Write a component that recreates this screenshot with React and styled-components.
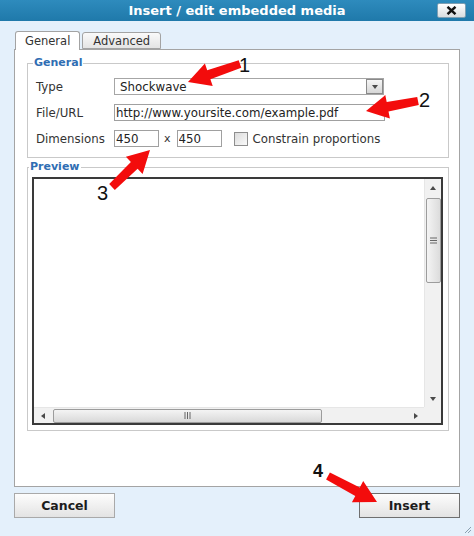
import React from "react";
import styled, { createGlobalStyle } from "styled-components";

const GlobalStyle = createGlobalStyle`
  html, body {
    margin: 0;
    padding: 0;
    background: #e4f0fb;
  }
  body {
    font-family: "DejaVu Sans", Verdana, sans-serif;
    color: #333;
  }
`;

const Window = styled.div`
  position: relative;
  width: 474px;
  height: 536px;
  background: #e4f0fb;
  overflow: hidden;
`;

const TitleBar = styled.div`
  height: 21px;
  display: grid;
  grid-template-columns: 1fr auto 1fr;
  align-items: center;
  background: linear-gradient(#2e8bbd, #1f79aa);
`;

const Title = styled.div`
  grid-column: 2;
  color: #fff;
  font-weight: bold;
  font-size: 13px;
  white-space: nowrap;
`;

const CloseButton = styled.div`
  grid-column: 3;
  justify-self: end;
  margin-right: 8px;
  width: 29px;
  height: 15px;
  box-sizing: border-box;
  display: flex;
  align-items: center;
  justify-content: center;
  background: linear-gradient(#ffffff, #d9dde0);
  border: 1px solid #7e9fb3;
  border-radius: 2px;
`;

const Body = styled.div`
  padding: 10px 14px 0 14px;
`;

const Tabs = styled.div`
  display: flex;
  align-items: flex-end;
  gap: 2px;
  padding-left: 1px;
  height: 18px;
  position: relative;
  z-index: 1;
`;

const Tab = styled.div`
  box-sizing: border-box;
  height: ${(p) => (p.active ? "19px" : "17px")};
  margin-bottom: ${(p) => (p.active ? "-1px" : "0")};
  padding: 0 ${(p) => (p.active ? "9px" : "10px")};
  display: flex;
  align-items: center;
  font-size: 11.5px;
  color: #333;
  border: 1px solid #a3a3a3;
  border-bottom: ${(p) => (p.active ? "none" : "1px solid #a3a3a3")};
  border-radius: 3px 3px 0 0;
  background: ${(p) => (p.active ? "#fff" : "linear-gradient(#fafafa, #e4e4e4)")};
`;

const Panel = styled.div`
  box-sizing: border-box;
  width: 446px;
  height: 438px;
  padding: 6px 10px 0 12px;
  background: #fff;
  border: 1px solid #a4a4a4;
`;

const Fieldset = styled.fieldset`
  margin: ${(p) => p.$top || 0} 0 0 0;
  padding: ${(p) => p.$pad};
  border: 1px solid #c9c9c9;
  min-width: 0;
`;

const Legend = styled.legend`
  padding: 0 1px;
  margin-left: -3px;
  font-size: 11px;
  line-height: 14px;
  font-weight: bold;
  color: #2f6eb3;
`;

const FormGrid = styled.div`
  display: grid;
  grid-template-columns: 78px 1fr;
  row-gap: 9px;
  align-items: center;
`;

const Label = styled.div`
  font-size: 11.8px;
  color: #333;
`;

const Select = styled.div`
  box-sizing: border-box;
  width: 270px;
  height: 17px;
  display: flex;
  align-items: center;
  justify-content: space-between;
  padding-left: 5px;
  border: 1px solid #a6a6a6;
  font-size: 11.8px;
  color: #222;
`;

const DropButton = styled.div`
  box-sizing: border-box;
  width: 17px;
  height: 15px;
  display: flex;
  align-items: center;
  justify-content: center;
  background: linear-gradient(#f6f6f6, #d6d6d6);
  border: 1px solid #8a8a8a;
`;

const TextInput = styled.input`
  box-sizing: border-box;
  width: ${(p) => p.$w}px;
  height: 17px;
  margin: 0;
  padding: 0 1px;
  border: 1px solid #a0a0a0;
  font-family: "DejaVu Sans", Verdana, sans-serif;
  font-size: 11.8px;
  color: #222;
  outline: none;
`;

const DimRow = styled.div`
  display: flex;
  align-items: center;
`;

const Times = styled.span`
  font-size: 11px;
  margin: 0 6px 0 5px;
  color: #333;
`;

const CheckBox = styled.span`
  box-sizing: border-box;
  width: 14px;
  height: 14px;
  margin-left: 12px;
  margin-right: 5px;
  border: 1px solid #8e8e8e;
  background: linear-gradient(135deg, #dcdcdc, #fafafa);
`;

const PreviewBox = styled.div`
  box-sizing: border-box;
  height: 248px;
  border: 2px solid #3a3a3a;
  display: grid;
  grid-template-columns: 1fr 17px;
  grid-template-rows: 1fr 16px;
  background: #fff;
`;

const VScroll = styled.div`
  display: flex;
  flex-direction: column;
  align-items: center;
  background: #f1f1f1;
  border-left: 1px solid #e6e6e6;
`;

const HScroll = styled.div`
  display: flex;
  align-items: center;
  background: #f1f1f1;
  border-top: 1px solid #e6e6e6;
`;

const Corner = styled.div`
  background: #f1f1f1;
`;

const ArrowCell = styled.div`
  flex: 0 0 ${(p) => p.$size}px;
  width: ${(p) => (p.$vertical ? "100%" : `${p.$size}px`)};
  height: ${(p) => (p.$vertical ? `${p.$size}px` : "100%")};
  display: flex;
  align-items: center;
  justify-content: center;
`;

const Thumb = styled.div`
  box-sizing: border-box;
  display: flex;
  align-items: center;
  justify-content: center;
  border: 1px solid #9c9c9c;
  border-radius: 2px;
  background: ${(p) =>
    p.$vertical
      ? "linear-gradient(to right, #f4f4f4, #dcdcdc)"
      : "linear-gradient(#f4f4f4, #d9d9d9)"};
`;

const Spacer = styled.div`
  flex: 1;
`;

const ButtonRow = styled.div`
  display: flex;
  justify-content: space-between;
  margin-top: 6px;
  width: 446px;
`;

const Button = styled.div`
  box-sizing: border-box;
  width: 101px;
  height: 25px;
  display: flex;
  align-items: center;
  justify-content: center;
  font-size: 12.5px;
  font-weight: bold;
  color: #1c1c1c;
  background: linear-gradient(#fdfdfd, #e3e3e3);
  border: 1px solid ${(p) => (p.$dark ? "#6f6f6f" : "#a9a9a9")};
`;

const Overlay = styled.svg`
  position: absolute;
  left: 0;
  top: 0;
  pointer-events: none;
`;

const Grip = styled.svg`
  position: absolute;
  right: 2px;
  bottom: 2px;
`;

const Tri = ({ dir }) => {
  const d = {
    up: "M0,4 L3,0 L6,4 Z",
    down: "M0,0 L6,0 L3,4 Z",
    left: "M4,0 L4,6 L0,3 Z",
    right: "M0,0 L0,6 L4,3 Z",
  }[dir];
  const w = dir === "up" || dir === "down" ? 6 : 4;
  const h = dir === "up" || dir === "down" ? 4 : 6;
  return (
    <svg width={w} height={h} viewBox={`0 0 ${w} ${h}`}>
      <path d={d} fill="#4a4a4a" />
    </svg>
  );
};

const arrowPoints = (x1, y1, x2, y2, shaft, headLen, headW) => {
  const dx = x2 - x1;
  const dy = y2 - y1;
  const len = Math.hypot(dx, dy);
  const ux = dx / len;
  const uy = dy / len;
  const px = -uy;
  const py = ux;
  const bx = x2 - ux * headLen;
  const by = y2 - uy * headLen;
  const pts = [
    [x1 + (px * shaft) / 2, y1 + (py * shaft) / 2],
    [bx + (px * shaft * 1.2) / 2, by + (py * shaft * 1.2) / 2],
    [bx + (px * headW) / 2, by + (py * headW) / 2],
    [x2, y2],
    [bx - (px * headW) / 2, by - (py * headW) / 2],
    [bx - (px * shaft * 1.2) / 2, by - (py * shaft * 1.2) / 2],
    [x1 - (px * shaft) / 2, y1 - (py * shaft) / 2],
  ];
  return pts.map((p) => p.map((v) => v.toFixed(1)).join(",")).join(" ");
};

const annotations = [
  { n: "1", from: [240, 64], to: [188, 82], tx: 239, ty: 72, bold: false },
  { n: "2", from: [418, 101], to: [366, 111], tx: 419, ty: 107, bold: false },
  { n: "3", from: [112, 187], to: [150, 150], tx: 97, ty: 200, bold: false },
  { n: "4", from: [328, 476], to: [377, 502], tx: 313, ty: 477, bold: true },
];

const Annotations = () => (
  <Overlay width="474" height="536" viewBox="0 0 474 536">
    {annotations.map((a) => (
      <g key={a.n}>
        <polygon
          points={arrowPoints(a.from[0], a.from[1], a.to[0], a.to[1], 8, 22, 24)}
          fill="#f30c0c"
        />
        <text
          x={a.tx}
          y={a.ty}
          fontFamily='"Liberation Sans", Arial, sans-serif'
          fontSize={a.bold ? 18 : 20}
          fontWeight={a.bold ? "bold" : "normal"}
          fill="#111"
        >
          {a.n}
        </text>
      </g>
    ))}
  </Overlay>
);

const GripLines = () => (
  <Grip width="9" height="9" viewBox="0 0 9 9">
    <path d="M8,2 L2,8 M8,5 L5,8" stroke="#8aa0b0" strokeWidth="1" />
  </Grip>
);

export default function App() {
  return (
    <Window>
      <GlobalStyle />
      <TitleBar>
        <Title>Insert / edit embedded media</Title>
        <CloseButton>
          <svg width="11" height="9" viewBox="0 0 11 9">
            <path d="M1.5,0.8 L9.5,8.2 M9.5,0.8 L1.5,8.2" stroke="#111" strokeWidth="2.4" />
          </svg>
        </CloseButton>
      </TitleBar>

      <Body>
        <Tabs>
          <Tab active>General</Tab>
          <Tab>Advanced</Tab>
        </Tabs>
        <Panel>
          <Fieldset $pad="8px 8px 10px 8px">
            <Legend>General</Legend>
            <FormGrid>
              <Label>Type</Label>
              <Select>
                Shockwave
                <DropButton>
                  <Tri dir="down" />
                </DropButton>
              </Select>

              <Label>File/URL</Label>
              <TextInput $w={271} readOnly value="http://www.yoursite.com/example.pdf" />

              <Label>Dimensions</Label>
              <DimRow>
                <TextInput $w={45} readOnly value="450" />
                <Times>x</Times>
                <TextInput $w={45} readOnly value="450" />
                <CheckBox />
                <Label>Constrain proportions</Label>
              </DimRow>
            </FormGrid>
          </Fieldset>

          <Fieldset $top="2px" $pad="3px 5px 5px 4px">
            <Legend>Preview</Legend>
            <PreviewBox>
              <div />
              <VScroll>
                <ArrowCell $vertical $size={17}>
                  <Tri dir="up" />
                </ArrowCell>
                <Thumb $vertical style={{ width: 15, height: 85, marginTop: 2 }}>
                  <svg width="7" height="7" viewBox="0 0 7 7">
                    <path d="M0,1 H7 M0,3.5 H7 M0,6 H7" stroke="#666" strokeWidth="1" />
                  </svg>
                </Thumb>
                <Spacer />
                <ArrowCell $vertical $size={17}>
                  <Tri dir="down" />
                </ArrowCell>
              </VScroll>
              <HScroll>
                <ArrowCell $size={17}>
                  <Tri dir="left" />
                </ArrowCell>
                <Thumb style={{ width: 269, height: 14, marginLeft: 2 }}>
                  <svg width="7" height="7" viewBox="0 0 7 7">
                    <path d="M1,0 V7 M3.5,0 V7 M6,0 V7" stroke="#666" strokeWidth="1" />
                  </svg>
                </Thumb>
                <Spacer />
                <ArrowCell $size={17}>
                  <Tri dir="right" />
                </ArrowCell>
              </HScroll>
              <Corner />
            </PreviewBox>
          </Fieldset>
        </Panel>

        <ButtonRow>
          <Button>Cancel</Button>
          <Button $dark>Insert</Button>
        </ButtonRow>
      </Body>

      <GripLines />
      <Annotations />
    </Window>
  );
}
